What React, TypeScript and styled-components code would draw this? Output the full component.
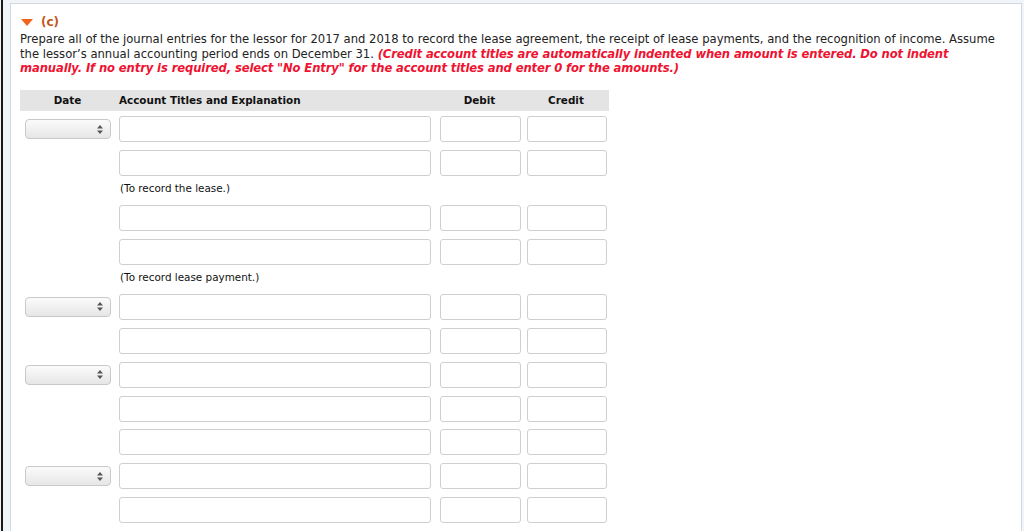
import React from 'react'
import styled, { createGlobalStyle } from 'styled-components';

const GlobalStyle = createGlobalStyle`
  html, body {
    margin: 0;
    padding: 0;
    background: #f1f4f8;
  }
  body {
    font-family: "DejaVu Sans", Verdana, sans-serif;
  }
`;

type Row = {
  date?: boolean
  note?: string
}

const rows: Row[] = [
  { date: true },
  { note: '(To record the lease.)' },
  {},
  { note: '(To record lease payment.)' },
  { date: true },
  {},
  { date: true },
  {},
  {},
  { date: true },
  {},
]

const Arrows = () => (
  <svg width="6" height="9" viewBox="0 0 6 9">
    <path d="M3 0 L6 3.5 L0 3.5 Z" fill="#555" />
    <path d="M3 9 L6 5.5 L0 5.5 Z" fill="#555" />
  </svg>
)

const App = () => {
  return (
    <Frame>
      <GlobalStyle />
      <Panel>
        <PartHeader>
          <Caret />
          <PartLabel>(c)</PartLabel>
        </PartHeader>
        <Instructions>
          Prepare all of the journal entries for the lessor for 2017 and 2018 to record the lease agreement, the receipt of lease payments, and the recognition of income. Assume the lessor’s annual accounting period ends on December 31.{' '}
          <Warning>(Credit account titles are automatically indented when amount is entered. Do not indent manually. If no entry is required, select "No Entry" for the account titles and enter 0 for the amounts.)</Warning>
        </Instructions>

        <Table>
          <HeadRow>
            <HeadCell $align="center">Date</HeadCell>
            <HeadCell $align="left">Account Titles and Explanation</HeadCell>
            <HeadCell $align="center">Debit</HeadCell>
            <HeadCell $align="center">Credit</HeadCell>
          </HeadRow>
          {rows.map((r, i) => (
            <React.Fragment key={i}>
              <EntryRow>
                <DateCell>
                  {r.date && (
                    <FakeSelect>
                      <Arrows />
                    </FakeSelect>
                  )}
                </DateCell>
                <Field $width={312} />
                <Field $width={81} />
                <Field $width={80} />
              </EntryRow>
              {r.note && <Note>{r.note}</Note>}
            </React.Fragment>
          ))}
        </Table>
      </Panel>
    </Frame>
  )
}

export default App

const Frame = styled.div`
  height: 531px;
  overflow: hidden;
  box-sizing: border-box;
  border-left: 2px solid #1a1a1a;
  margin-left: 1px;
  padding: 3px 2px 0 7px;
`;

const Panel = styled.div`
  background: #fff;
  border: 1px solid #d3d9e2;
  border-bottom: none;
  min-height: 600px;
  padding: 9px 9px 0 9px;
`;

const PartHeader = styled.div`
  display: flex;
  align-items: center;
  gap: 8px;
  height: 18px;
  margin-bottom: 1px;
`;

const Caret = styled.span`
  width: 0;
  height: 0;
  margin-left: 1px;
  border-left: 6px solid transparent;
  border-right: 6px solid transparent;
  border-top: 7px solid #f0641f;
`;

const PartLabel = styled.span`
  font-weight: bold;
  font-size: 12px;
  color: #c4561e;
`;

const Instructions = styled.p`
  margin: 0;
  font-size: 11.6px;
  line-height: 14.5px;
  color: #222;
  width: 990px;
`;

const Warning = styled.span`
  color: #ee1331;
  font-weight: bold;
  font-style: italic;
  letter-spacing: -0.12px;
`;

const Table = styled.div`
  margin-top: 14px;
  width: 589px;
`;

const HeadRow = styled.div`
  display: grid;
  grid-template-columns: 95px 321px 87px 86px;
  height: 21px;
  align-items: center;
  background: #e4e4e4;
  margin-bottom: 2px;
`;

const HeadCell = styled.div<{ $align: 'left' | 'center' }>`
  font-family: "DejaVu Sans", Tahoma, sans-serif;
  font-weight: bold;
  font-size: 10.4px;
  color: #111;
  text-align: ${(p) => p.$align};
  padding-left: ${(p) => (p.$align === 'left' ? '4px' : '0')};
`;

const EntryRow = styled.div`
  display: grid;
  grid-template-columns: 95px 321px 87px 86px;
  align-items: center;
  padding: 3.94px 0;
`;

const DateCell = styled.div`
  display: flex;
  justify-content: center;
`;

const FakeSelect = styled.div`
  box-sizing: border-box;
  width: 86px;
  height: 20px;
  border: 1px solid #c9c9c9;
  border-radius: 4px;
  background: linear-gradient(#fbfbfb, #e6e6e6);
  display: flex;
  align-items: center;
  justify-content: flex-end;
  padding-right: 7px;
`;

const Field = styled.div<{ $width: number }>`
  box-sizing: border-box;
  width: ${(p) => p.$width}px;
  height: 26px;
  margin-left: 4px;
  border: 1px solid #cfcfcf;
  border-radius: 3px;
  background: #fff;
`;

const Note = styled.div`
  height: 21px;
  padding-left: 100px;
  font-family: "DejaVu Sans", Tahoma, sans-serif;
  font-size: 10.4px;
  line-height: 16px;
  color: #111;
`;
